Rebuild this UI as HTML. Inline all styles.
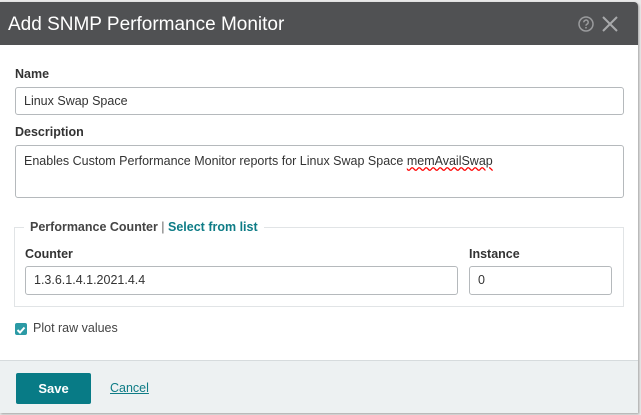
<!DOCTYPE html>
<html><head><style>
*{box-sizing:border-box;margin:0;padding:0}
body{width:641px;height:415px;overflow:hidden;background:#e8e8e8;font-family:"Liberation Sans",sans-serif;position:relative}
.dlg{position:absolute;left:0;top:2px;width:638px;height:411px;background:#fff;border-radius:0 4px 0 0;overflow:hidden;box-shadow:1px 1px 2px rgba(0,0,0,.3)}
.hdr{height:43px;background:#505153;color:#fff;font-size:19px;padding:12px 0 0 8px}
.lbl{position:absolute;font-size:12.5px;font-weight:bold;color:#333}
.inp{position:absolute;border:1px solid #b5b9bc;border-radius:3px;font-size:12.5px;color:#333;padding-left:8px;background:#fff}
.fs{position:absolute;left:14px;top:225px;width:610px;height:80px;border:1px solid #e1e4e6}
.foot{position:absolute;left:0;top:358px;width:638px;height:53px;background:#edf1f2;border-top:1px solid #d6dbdd}
</style></head><body>
<div class="dlg">
<div class="hdr">Add SNMP Performance Monitor</div>
<svg style="position:absolute;left:578px;top:14px" width="16" height="16" viewBox="0 0 16 16"><circle cx="8" cy="8" r="7" fill="none" stroke="#9a9b9d" stroke-width="1.5"/><path d="M5.8 6.3a2.2 2.2 0 1 1 3 2c-.6.3-.8.7-.8 1.4" fill="none" stroke="#9a9b9d" stroke-width="1.5"/><circle cx="8" cy="11.8" r=".9" fill="#9a9b9d"/></svg>
<svg style="position:absolute;left:602px;top:14px" width="16" height="16" viewBox="0 0 16 16"><path d="M1 1L15 15M15 1L1 15" stroke="#a8a9ab" stroke-width="2"/></svg>
<div class="lbl" style="left:15px;top:65px">Name</div>
<div class="inp" style="left:15px;top:85px;width:609px;height:28px;line-height:26px">Linux Swap Space</div>
<div class="lbl" style="left:15px;top:123px">Description</div>
<div class="inp" style="left:15px;top:143px;width:609px;height:53px;padding-top:8px">Enables Custom Performance Monitor reports for Linux Swap Space <span style="text-decoration:underline wavy red">memAvailSwap</span></div>
<div class="fs"></div>
<div style="position:absolute;left:24px;top:218px;background:#fff;padding:0 6px;font-size:12.5px;font-weight:bold;color:#444">Performance Counter <span style="font-weight:normal;color:#666">|</span> <span style="color:#0e7c86">Select from list</span></div>
<div class="lbl" style="left:25px;top:245px">Counter</div>
<div class="inp" style="left:25px;top:264px;width:433px;height:29px;line-height:27px">1.3.6.1.4.1.2021.4.4</div>
<div class="lbl" style="left:469px;top:245px">Instance</div>
<div class="inp" style="left:469px;top:264px;width:143px;height:29px;line-height:27px">0</div>
<div style="position:absolute;left:15px;top:321px;width:12px;height:12px;background:#2b9aa5;border-radius:2px"><svg width="12" height="12" viewBox="0 0 12 12"><path d="M2.5 6l2.5 2.5 4.5-5" fill="none" stroke="#fff" stroke-width="2"/></svg></div>
<div style="position:absolute;left:33px;top:319px;font-size:12.5px;color:#444">Plot raw values</div>
<div class="foot">
<div style="position:absolute;left:16px;top:12px;width:75px;height:31px;background:#087b86;border-radius:2px;color:#fff;font-weight:bold;font-size:13px;text-align:center;line-height:31px">Save</div>
<div style="position:absolute;left:110px;top:20px;font-size:12.5px;color:#0e7c86;text-decoration:underline">Cancel</div>
</div>
</div>
</body></html>
